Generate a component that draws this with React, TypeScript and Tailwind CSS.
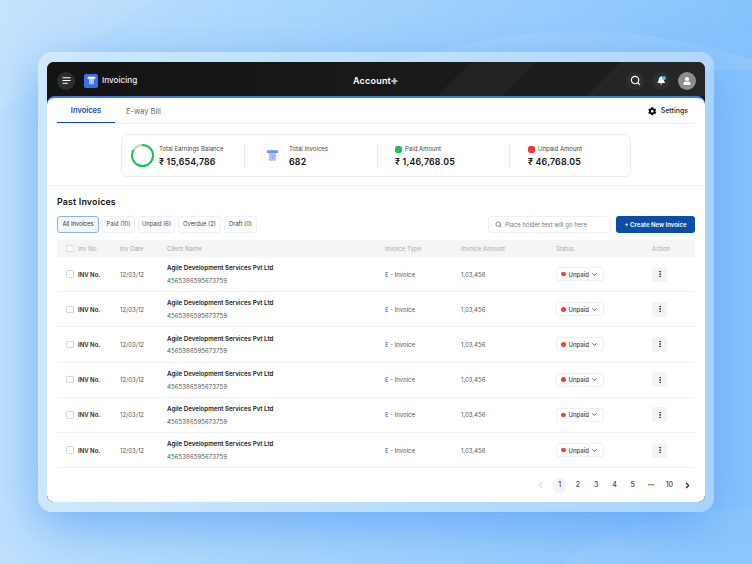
import { ChevronDown, ChevronLeft, ChevronRight, EllipsisVertical, Search } from "lucide-react";
import { FaBell, FaCog, FaUser } from "react-icons/fa";

const rows = [0, 1, 2, 3, 4, 5];
const filters = [
  { label: "Paid (10)", w: "w-[33px]" },
  { label: "Unpaid (6)", w: "w-[37px]" },
  { label: "Overdue (2)", w: "w-[43px]" },
  { label: "Draft (0)", w: "w-[33px]" },
];
const cols = "grid grid-cols-[21px_42px_47px_218px_76px_95px_96px_43px] items-center";

function Receipt({ className }: { className?: string }) {
  return (
    <svg viewBox="0 0 16 16" className={className}>
      <rect x="1" y="1.500" width="14" height="3.500" rx="1" fill="currentColor" />
      <path d="M3.500 4h9v11l-1.500-1-1.500 1-1.500-1-1.500 1-1.500-1-1.500 1z" fill="currentColor" opacity="0.55" />
      <path d="M6 7h1M9 7h1M7 9h2M8 11v1.500" stroke="currentColor" strokeWidth="1" fill="none" />
    </svg>
  );
}

function Stat({ icon, label, value, className }: { icon?: React.ReactNode; label: React.ReactNode; value: string; className: string }) {
  return (
    <div className={`flex items-center ${className}`}>
      {icon}
      <div>
        <div className="flex items-center gap-[3px] pt-[1px] text-[6px] leading-[10px] text-[#444]">{label}</div>
        <div className="mt-[2px] text-[8.800px] leading-[12px] font-semibold tracking-[0.2px] text-[#111]">{value}</div>
      </div>
    </div>
  );
}

export default function App() {
  return (
    <div className="relative h-[564px] w-[752px] overflow-hidden bg-gradient-to-r from-[#bfe1fd] via-[#a3d3fc] to-[#86c3fd] pt-[52px] pl-[38px] font-['Inter',sans-serif]">
      {/* backdrop curves */}
      <svg viewBox="0 0 752 564" className="absolute inset-0 h-full w-full">
        <path d="M400 60C480 38 530 31 580 31C650 31 710 45 752 60V70H400Z" fill="#fff" opacity="0.09" />
        <path d="M560 564C610 525 680 510 752 508V564Z" fill="#fff" opacity="0.06" />
        <path d="M0 0H150L0 110Z" fill="#fff" opacity="0.08" />
      </svg>

      <div className="relative h-[460px] w-[676px] rounded-[14px] bg-white/25 px-[9px] pt-[10px] shadow-[0_14px_50px_#4f97f5aa]">
        <div className="flex h-[440px] flex-col overflow-hidden rounded-[7px] bg-[#141414]">
          {/* Header */}
          <header className="relative flex h-[34px] shrink-0 items-center justify-between bg-gradient-to-r from-[#131313] to-[#1f1f1f] pt-[3px] pr-[9px] pl-[10px]">
            <svg viewBox="0 0 658 34" className="absolute inset-0 h-full w-full">
              <path d="M390 34L424 0H490L456 34Z" fill="#fff" opacity="0.03" />
              <path d="M540 34L574 0H658V34Z" fill="#fff" opacity="0.03" />
            </svg>
            <div className="relative flex items-center">
              <button className="flex h-[18px] w-[18px] items-center justify-center rounded-full bg-[#2e2e2e]">
                <svg viewBox="0 0 10 10" className="h-[9px] w-[9px]">
                  <path d="M1 2h8M1 5h8M1 8h5" stroke="#fff" strokeWidth="1.200" strokeLinecap="round" />
                </svg>
              </button>
              <div className="ml-[9px] flex h-[14px] w-[14px] items-center justify-center rounded-[2px] bg-[#3a6ff0] text-white">
                <Receipt className="h-[9px] w-[9px]" />
              </div>
              <span className="ml-[4px] text-[8.200px] font-medium text-[#eee]">Invoicing</span>
            </div>
            <div className="absolute left-[306px] text-[9px] font-semibold tracking-[0.2px] text-white">
              Account<span className="text-[8px] text-[#bbb]">✚</span>
            </div>
            <div className="relative flex items-center gap-[8px]">
              <div className="flex h-[18px] w-[18px] items-center justify-center rounded-full bg-[#2e2e2e] text-white">
                <Search className="h-[11px] w-[11px]" strokeWidth={2.500} />
              </div>
              <div className="relative flex h-[18px] w-[18px] items-center justify-center rounded-full bg-[#2e2e2e] text-white">
                <FaBell className="h-[8.500px] w-[8.500px]" />
                <span className="absolute top-[4.500px] right-[4.500px] h-[3.500px] w-[3.500px] rounded-full bg-[#38bdf8]" />
              </div>
              <div className="flex h-[18px] w-[18px] items-center justify-center rounded-full bg-[#8d8d8d] text-white">
                <FaUser className="h-[8px] w-[8px]" />
              </div>
            </div>
          </header>

          <main className="flex flex-1 flex-col rounded-t-[8px] rounded-b-[6px] border-t-2 border-[#3d78ea] bg-white px-[10px]">
            {/* Tabs */}
            <div className="flex h-[26px] shrink-0 items-stretch justify-between border-b border-[#eef0f5]">
              <div className="flex">
                <div className="flex w-[58px] items-center justify-center border-b-[1.500px] border-[#0a4ea8] pt-[2px] text-[7.500px] font-semibold text-[#0a4ea8]">
                  Invoices
                </div>
                <div className="ml-[11px] flex items-center pt-[2px] text-[7.500px] text-[#666]">E-way Bill</div>
              </div>
              <div className="flex items-center gap-[3px] pt-[2px] pr-[7px] text-[7px] font-medium text-[#222]">
                <FaCog className="h-[8.500px] w-[8.500px] text-[#111]" />
                <span className="ml-[1px]">Settings</span>
              </div>
            </div>

            {/* Stats */}
            <div className="-mx-[10px] flex h-[62px] shrink-0 items-start border-b border-[#f3f4f7] pt-[10px] pl-[74px]">
              <div className="flex h-[43px] w-[510px] items-center rounded-[6px] border border-[#e9ecf4] bg-white">
                <Stat
                  className="h-[24px] w-[123px] border-r border-[#e6ebf5] pl-[9px]"
                  icon={
                    <div className="mr-[5px] h-[23px] w-[23px] rounded-full bg-[conic-gradient(#1cbf5c_0_84%,#c9c9c9_84%_100%)] p-[2px]">
                      <div className="h-full w-full rounded-full bg-white" />
                    </div>
                  }
                  label="Total Earnings Balance"
                  value="₹ 15,654,786"
                />
                <Stat
                  className="h-[24px] w-[133px] border-r border-[#e6ebf5] pl-[17px]"
                  icon={
                    <div className="mr-[6px] flex h-[21px] w-[21px] items-center justify-center rounded-[5px] bg-white text-[#6d93f2] shadow-[0_0_3px_#e6ebf5]">
                      <Receipt className="h-[13px] w-[13px]" />
                    </div>
                  }
                  label="Total Invoices"
                  value="682"
                />
                <Stat
                  className="h-[24px] w-[132px] border-r border-[#e6ebf5] pl-[17px]"
                  label={
                    <>
                      <span className="h-[7px] w-[7px] rounded-[2.500px] bg-[#1cbf5c]" />
                      <span>Paid Amount</span>
                    </>
                  }
                  value="₹ 1,46,768.05"
                />
                <Stat
                  className="h-[24px] pl-[18px]"
                  label={
                    <>
                      <span className="h-[7px] w-[7px] rounded-[2.500px] bg-[#f0383f]" />
                      <span>Unpaid Amount</span>
                    </>
                  }
                  value="₹ 46,768.05"
                />
              </div>
            </div>

            <h2 className="mt-[10px] text-[8.800px] leading-[12px] font-semibold tracking-[0.2px] text-[#111]">Past Invoices</h2>

            {/* Filters + search */}
            <div className="mt-[7px] flex h-[18px] shrink-0 items-center">
              <div className="flex h-[17px] w-[42px] items-center justify-center rounded-[3px] border border-[#8db4e6] bg-[#f1f7fe] text-[5.800px] text-[#333]">
                All Invoices
              </div>
              {filters.map((f) => (
                <div key={f.label} className={`ml-[3px] flex h-[17px] items-center justify-center rounded-[3px] border border-[#eef0f4] text-[5.800px] text-[#444] ${f.w}`}>
                  {f.label}
                </div>
              ))}
              <div className="ml-auto flex h-[17px] w-[123px] items-center rounded-[3px] border border-[#eceef3] pl-[6px] text-[6px] text-[#777]">
                <Search className="mr-[3px] h-[7px] w-[7px] text-[#444]" />
                Place holder text will go here
              </div>
              <button className="ml-[5px] h-[17px] w-[79px] rounded-[3px] bg-[#0a4ea8] text-[6px] font-semibold text-white">
                + Create New Invoice
              </button>
            </div>

            {/* Table */}
            <div className={`${cols} mt-[7px] h-[17px] shrink-0 bg-[#f5f5f5] text-[6px] text-[#aaa]`}>
              <span className="ml-[9px] h-[7.500px] w-[7.500px] rounded-[1px] border border-[#ddd] bg-white/60" />
              <span>Inv No.</span>
              <span>Inv Date</span>
              <span>Client Name</span>
              <span>Invoice Type</span>
              <span>Invoice Amount</span>
              <span>Status</span>
              <span>Action</span>
            </div>
            {rows.map((r) => (
              <div key={r} className={`${cols} h-[35.200px] shrink-0 border-b border-[#f3f3f3] text-[6px] text-[#555]`}>
                <span className="ml-[9px] h-[7.500px] w-[7.500px] rounded-[1px] border border-[#d8d8d8]" />
                <span className="font-semibold text-[#222]">INV No.</span>
                <span>12/03/12</span>
                <div>
                  <div className="text-[6.200px] font-semibold text-[#222]">Agile Development Services Pvt Ltd</div>
                  <div className="mt-[3.500px] tracking-[0.1px] text-[#555]">4565386595673759</div>
                </div>
                <span>E - Invoice</span>
                <span>1,03,456</span>
                <div className="flex h-[14px] w-[48px] items-center rounded-[3px] border border-[#eeeeee] pl-[4px] text-[#444]">
                  <span className="mr-[3px] h-[4.500px] w-[4.500px] rounded-full bg-[#f0383f]" />
                  <span className="font-medium">Unpaid</span>
                  <ChevronDown className="ml-[2px] h-[7px] w-[7px]" strokeWidth={3} />
                </div>
                <div className="flex h-[15px] w-[15px] items-center justify-center rounded-[2px] bg-[#f4f4f4] text-[#333]">
                  <EllipsisVertical className="h-[8px] w-[8px]" strokeWidth={3} />
                </div>
              </div>
            ))}

            {/* Pagination */}
            <div className="flex flex-1 items-center justify-end gap-[3px] pr-[3px] text-[7px] font-medium text-[#444]">
              <ChevronLeft className="mr-[4px] h-[9px] w-[9px] text-[#bbb]" />
              <span className="flex h-[15px] w-[15px] items-center justify-center rounded-full bg-[#f2f4f8]">1</span>
              {["2", "3", "4", "5", "•••", "10"].map((p) => (
                <span key={p} className={`flex h-[15px] w-[15.300px] items-center justify-center ${p === "•••" ? "text-[4.500px] font-bold" : ""}`}>
                  {p}
                </span>
              ))}
              <ChevronRight className="ml-[3px] h-[9px] w-[9px] text-[#222]" strokeWidth={3} />
            </div>
          </main>
        </div>
      </div>
    </div>
  );
}
